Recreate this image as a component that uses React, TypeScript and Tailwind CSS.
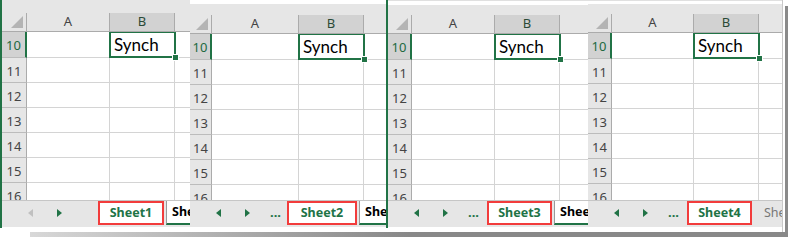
import React from "react";

const rows = [10, 11, 12, 13, 14, 15, 16];

function Tri({ dir, color }: { dir: "l" | "r"; color: string }) {
  return (
    <svg width="5" height="8" viewBox="0 0 5 8" className="block">
      {dir === "l" ? (
        <path d="M5 0 L0 4 L5 8 Z" fill={color} />
      ) : (
        <path d="M0 0 L5 4 L0 8 Z" fill={color} />
      )}
    </svg>
  );
}

type SheetProps = {
  panel: string;
  top: React.ReactNode;
  rh: string;
  ca: string;
  cb: string;
  cc: string;
  nav: React.ReactNode;
  tabName: string;
  tabBox: string;
  next: React.ReactNode;
  leftBorder?: boolean;
};

function Sheet(p: SheetProps) {
  return (
    <div className={`${p.panel} flex h-full shrink-0`}>
      {p.leftBorder && <div className="w-[2px] h-[228px] bg-[#217346] shrink-0" />}
      <div className="flex-1 flex flex-col min-w-0">
        {p.top}
        {/* column header */}
        <div className="flex h-[19px] shrink-0 bg-[#e6e6e6] border-b border-[#ababab]">
          <div className={`${p.rh} shrink-0 border-r border-[#ababab] relative`}>
            <svg width="12" height="12" viewBox="0 0 12 12" className="absolute right-[3px] bottom-[3px]">
              <path d="M12 0 L12 12 L0 12 Z" fill="#b4b4b4" />
            </svg>
          </div>
          <div className={`${p.ca} shrink-0 border-r border-[#ababab] flex items-center justify-center text-[13px] text-[#444]`}>A</div>
          <div className={`${p.cb} shrink-0 border-r border-[#ababab] bg-[#d2d2d2] flex items-center justify-center text-[13px] text-[#2b4a37]`}>B</div>
          <div className={`${p.cc} shrink-0`} />
        </div>
        {/* rows */}
        <div className="flex-1 overflow-hidden min-h-0">
          {rows.map((r) => (
            <div key={r} className={`flex shrink-0 ${r === 10 ? "h-[26px]" : "h-[25px]"}`}>
              <div
                className={`${p.rh} shrink-0 flex items-center justify-center pt-[3px] text-[13px] border-b border-[#bcbcbc] ${
                  r === 10
                    ? "bg-[#d2d2d2] text-[#21693f] border-r-2 border-r-[#217346]"
                    : "bg-[#e6e6e6] text-[#444] border-r border-r-[#ababab]"
                }`}
              >
                {r}
              </div>
              <div className={`${p.ca} shrink-0 border-r border-b border-[#d4d4d4]`} />
              {r === 10 ? (
                <div className={`${p.cb} shrink-0 relative`}>
                  <div className="absolute inset-x-[-1px] top-[-1px] bottom-0 border-2 border-[#217346] flex items-center pl-[3px] text-[17px] text-black font-['Lato',sans-serif]">
                    Synch
                  </div>
                  <div className="absolute right-[-4px] bottom-[-3px] w-[7px] h-[7px] bg-[#217346] border border-white" />
                </div>
              ) : (
                <div className={`${p.cb} shrink-0 border-r border-b border-[#d4d4d4]`} />
              )}
              <div className={`${p.cc} shrink-0 border-b border-[#d4d4d4]`} />
            </div>
          ))}
        </div>
        {/* tab bar */}
        <div className="h-[27px] shrink-0 bg-[#e6e6e6] border-t border-[#c6c6c6] pb-[2px] flex items-stretch">
          {p.nav}
          <div className={`${p.tabBox} shrink-0 bg-white border-2 border-[#f23c3c] flex items-center justify-center text-[12.5px] font-bold text-[#217346]`}>
            {p.tabName}
          </div>
          {p.next}
        </div>
        <div className="h-[5px] shrink-0 bg-white" />
      </div>
    </div>
  );
}

function NextTab({ text, gray }: { text: string; gray?: boolean }) {
  if (gray) {
    return (
      <div className="flex-1 min-w-0 flex items-center overflow-hidden pl-[12px]">
        <span className="text-[12.5px] whitespace-nowrap text-[#777]">{text}</span>
      </div>
    );
  }
  return (
    <div className="flex-1 min-w-0 ml-[2px] bg-white border-l border-l-[#9a9a9a] border-b-2 border-b-[#217346] flex items-center overflow-hidden pl-[5px]">
      <span className="text-[12.5px] whitespace-nowrap font-bold text-black">{text}</span>
    </div>
  );
}

function Nav({ first, w }: { first?: boolean; w: string }) {
  return (
    <div className={`${w} shrink-0 flex items-center`}>
      <div className="ml-[26px]">
        <Tri dir="l" color={first ? "#c0c0c0" : "#217346"} />
      </div>
      <div className="ml-[24px]">
        <Tri dir="r" color="#217346" />
      </div>
      {!first && <div className="ml-[20px] text-[13px] font-bold text-[#217346] leading-none pb-[2px]">...</div>}
    </div>
  );
}

export default function App() {
  return (
    <div className="w-[788px] h-[237px] bg-white overflow-hidden relative font-['Noto_Sans',sans-serif]">
      <div className="flex h-[232px]">
        <Sheet
          panel="w-[190px]"
          leftBorder
          top={<div className="h-[13px] shrink-0 bg-[#e6e6e6]" />}
          rh="w-[25px]"
          ca="w-[83px]"
          cb="w-[65px]"
          cc="w-[15px]"
          nav={<Nav first w="w-[96px]" />}
          tabName="Sheet1"
          tabBox="w-[66px]"
          next={<NextTab text="Sheet5" />}
        />
        <Sheet
          panel="w-[196px]"
          top={
            <>
              <div className="h-[4px] shrink-0 bg-white" />
              <div className="h-[11px] shrink-0 bg-[#e6e6e6]" />
            </>
          }
          rh="w-[22px]"
          ca="w-[87px]"
          cb="w-[65px]"
          cc="w-[22px]"
          nav={<Nav w="w-[97px]" />}
          tabName="Sheet2"
          tabBox="w-[70px]"
          next={<NextTab text="Sheet5" />}
        />
        <Sheet
          panel="w-[202px]"
          leftBorder
          top={
            <>
              <div className="h-[5px] shrink-0 bg-white border-t border-[#e0e0e0]" />
              <div className="h-[10px] shrink-0 bg-[#e6e6e6]" />
            </>
          }
          rh="w-[24px]"
          ca="w-[83px]"
          cb="w-[65px]"
          cc="w-[28px]"
          nav={<Nav w="w-[99px]" />}
          tabName="Sheet3"
          tabBox="w-[65px]"
          next={<NextTab text="Sheet5" />}
        />
        <Sheet
          panel="w-[194px]"
          top={
            <>
              <div className="h-[4px] shrink-0 bg-white border-t border-[#e0e0e0]" />
              <div className="h-[10px] shrink-0 bg-[#e6e6e6]" />
            </>
          }
          rh="w-[24px]"
          ca="w-[82px]"
          cb="w-[65px]"
          cc="w-[23px]"
          nav={<Nav w="w-[99px]" />}
          tabName="Sheet4"
          tabBox="w-[65px]"
          next={<NextTab text="Sheet5" gray />}
        />
        <div className="w-[6px] h-full flex">
          <div className="w-[1px] bg-[#c8c8c8]" />
          <div className="w-[2px] bg-white" />
          <div className="w-[3px] bg-[#8a8a8a] mt-[6px]" />
        </div>
      </div>
      <div className="h-[5px] flex">
        <div className="w-[30px]" />
        <div className="flex-1 bg-gradient-to-r from-[#d8d8d8] via-[#888] to-[#888]" />
      </div>
    </div>
  );
}
